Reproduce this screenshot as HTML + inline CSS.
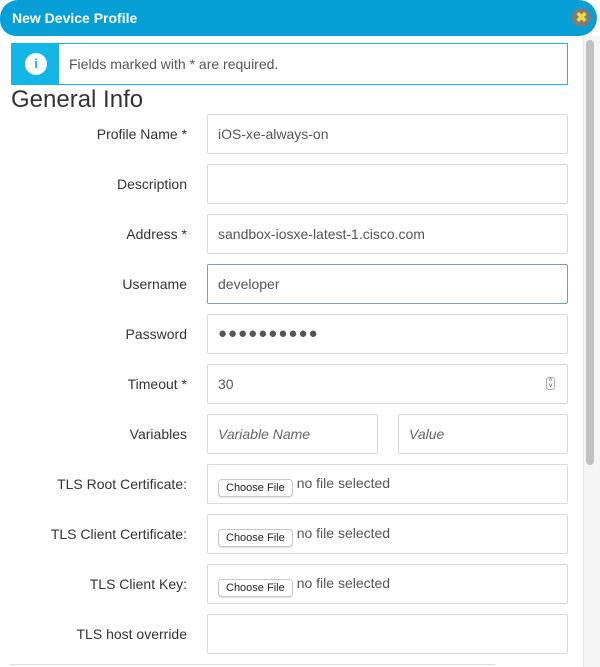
<!DOCTYPE html>
<html><head><style>
*{box-sizing:border-box}
body{margin:0;width:600px;height:667px;background:#fff;font-family:"Liberation Sans",Arial,sans-serif;position:relative;overflow:hidden}
.hdr{position:absolute;left:0;top:0;width:597px;height:36px;background:#069fd6;border-radius:18px 18px 18px 18px / 18px 18px 18px 18px;border-bottom-left-radius:16px}
.hdr span{position:absolute;left:12px;top:10px;color:#fff;font-weight:bold;font-size:14px}
.x{position:absolute;left:572px;top:8px;width:19px;height:19px;border-radius:50%;background:#7c7c7c;color:#f5d938;font-size:14px;font-weight:bold;text-align:center;line-height:19px}
.track{position:absolute;left:583px;top:36px;width:17px;height:631px;background:#f5f5f5;border-left:1px solid #e6e6e6}
.thumb{position:absolute;left:586px;top:40px;width:8px;height:425px;background:#c1c1c1;border-radius:4px}
.alert{position:absolute;left:11px;top:43px;width:557px;height:42px;border:1px solid #14b6e6}
.alert .ib{position:absolute;left:0;top:0;width:47px;height:40px;background:#14b6e6}
.alert .ib i{position:absolute;left:13px;top:9px;width:22px;height:22px;border-radius:50%;background:#fff;color:#14b6e6;font-style:normal;font-weight:bold;font-size:13px;text-align:center;line-height:22px}
.alert .t{position:absolute;left:57px;top:12px;font-size:14px;color:#555}
h1{position:absolute;left:11px;top:86px;margin:0;font-weight:normal;font-size:24px;color:#333}
.lbl{position:absolute;right:413px;font-size:14px;color:#333;text-align:right;white-space:nowrap}
.in{position:absolute;left:207px;width:361px;height:40px;border:1px solid #d9d9d9;border-radius:2px;font-size:14px;color:#555;padding:11px 10px;white-space:nowrap}
.ph{font-style:italic;color:#666}
.btn{display:inline-block;font-size:11px;color:#222;border:1px solid #c8c8c8;border-radius:4px;padding:2px 7px;margin-right:4px;background:#fff;box-shadow:0 1px 1px #ddd;vertical-align:-3px}
.line{position:absolute;left:10px;top:664px;width:485px;height:1px;background:#ddd}
</style></head><body>
<div class="hdr"><span>New Device Profile</span><div class="x">✖</div></div>
<div class="track"></div><div class="thumb"></div>
<div class="alert"><div class="ib"><i>i</i></div><div class="t">Fields marked with * are required.</div></div>
<h1>General Info</h1>
<div class="lbl" style="top:126px">Profile Name *</div><div class="in" style="top:114px">iOS-xe-always-on</div>
<div class="lbl" style="top:176px">Description</div><div class="in" style="top:164px"></div>
<div class="lbl" style="top:226px">Address *</div><div class="in" style="top:214px">sandbox-iosxe-latest-1.cisco.com</div>
<div class="lbl" style="top:276px">Username</div><div class="in" style="top:264px;border-color:#7a9fb0">developer</div>
<div class="lbl" style="top:326px">Password</div><div class="in" style="top:314px;font-size:15px;letter-spacing:1px;padding-top:10px">●●●●●●●●●●</div>
<div class="lbl" style="top:376px">Timeout *</div><div class="in" style="top:364px">30<span style="position:absolute;right:12px;top:12px;width:9px;height:13px;border:1px solid #aaa;border-radius:3px;font-size:7px;line-height:6px;text-align:center;color:#555">˄<br>˅</span></div>
<div class="lbl" style="top:426px">Variables</div><div class="in ph" style="top:414px;width:171px">Variable Name</div><div class="in ph" style="top:414px;left:398px;width:170px">Value</div>
<div class="lbl" style="top:476px">TLS Root Certificate:</div><div class="in" style="top:464px;padding-top:10px"><span class="btn">Choose File</span>no file selected</div>
<div class="lbl" style="top:526px">TLS Client Certificate:</div><div class="in" style="top:514px;padding-top:10px"><span class="btn">Choose File</span>no file selected</div>
<div class="lbl" style="top:576px">TLS Client Key:</div><div class="in" style="top:564px;padding-top:10px"><span class="btn">Choose File</span>no file selected</div>
<div class="lbl" style="top:626px">TLS host override</div><div class="in" style="top:614px"></div>
<div class="line"></div>
</body></html>
